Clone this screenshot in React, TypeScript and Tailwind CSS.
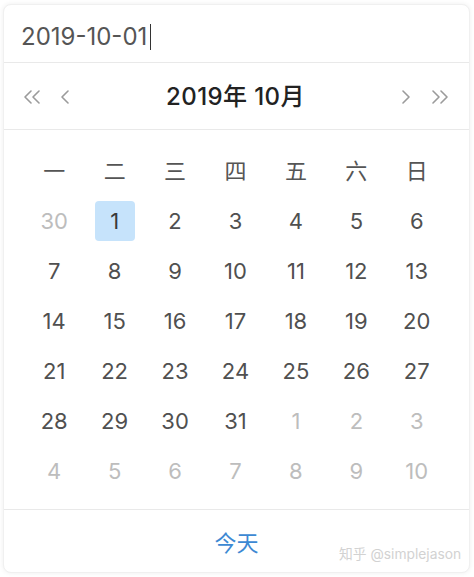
import { useState } from 'react';

const weekdays = ['一', '二', '三', '四', '五', '六', '日'];

interface Day {
  n: number;
  inMonth: boolean;
}

// October 2019, weeks starting on Monday
function buildDays(): Day[] {
  const days: Day[] = [{ n: 30, inMonth: false }];
  for (let d = 1; d <= 31; d++) days.push({ n: d, inMonth: true });
  let next = 1;
  while (days.length < 42) days.push({ n: next++, inMonth: false });
  return days;
}

function Chevron({ dir, double }: { dir: 'left' | 'right'; double?: boolean }) {
  const single = dir === 'left' ? 'M8 1 L2 7 L8 13' : 'M1 1 L7 7 L1 13';
  if (!double) {
    return (
      <svg width="9" height="14" viewBox="0 0 9 14" fill="none" stroke="#9b9b9b" strokeWidth="1.6" strokeLinecap="round" strokeLinejoin="round">
        <path d={single} />
      </svg>
    );
  }
  const paths = dir === 'left'
    ? ['M8 1 L2 7 L8 13', 'M16 1 L10 7 L16 13']
    : ['M1 1 L7 7 L1 13', 'M9 1 L15 7 L9 13'];
  return (
    <svg width="17" height="14" viewBox="0 0 17 14" fill="none" stroke="#9b9b9b" strokeWidth="1.6" strokeLinecap="round" strokeLinejoin="round">
      {paths.map((d) => (
        <path key={d} d={d} />
      ))}
    </svg>
  );
}

export default function App() {
  const [selected, setSelected] = useState(1);
  const days = buildDays();

  return (
    <div className="relative w-[474px] h-[577px] bg-white overflow-hidden font-[Inter,'Noto_Sans_CJK_SC',sans-serif]">
      <div className="pt-[4px] pl-[3px]">
        <div className="w-[467px] h-[569px] flex flex-col rounded-[8px] bg-white border border-[#f0f0f0] shadow-[0_0_5px_rgba(0,0,0,0.07)]">
          {/* Input */}
          <div className="h-[58px] flex items-center pl-[17px] pt-[6px] border-b border-[#e9e9e9]">
            <span className="text-[24px] leading-none text-[#555]">2019-10-01</span>
            <span className="ml-[3px] w-px h-[26px] bg-[#333]" />
          </div>

          {/* Month header */}
          <div className="h-[67px] flex items-center justify-between pl-[19px] pr-[20px] pt-[1px] border-b border-[#e9e9e9]">
            <div className="flex items-center gap-[20px]">
              <Chevron dir="left" double />
              <Chevron dir="left" />
            </div>
            <div className="text-[24px] font-medium text-[#222] leading-none tracking-[0.4px]">2019年 10月</div>
            <div className="flex items-center gap-[21px]">
              <Chevron dir="right" />
              <Chevron dir="right" double />
            </div>
          </div>

          {/* Day grid */}
          <div className="pt-[16px] pl-[20px] pr-[22px] pb-[13px] border-b border-[#e9e9e9]">
            <div className="grid grid-cols-7 auto-rows-[50px]">
              {weekdays.map((w) => (
                <div key={w} className="flex items-center justify-center text-[22px] text-[#555]">
                  {w}
                </div>
              ))}
              {days.map((d, i) => {
                const isSel = d.inMonth && d.n === selected;
                return (
                  <div key={i} className="flex items-center justify-center">
                    <button
                      type="button"
                      onClick={() => d.inMonth && setSelected(d.n)}
                      className={`w-[40px] h-[40px] flex items-center justify-center rounded-[4px] text-[22px] leading-none ${
                        isSel ? 'bg-[#c6e3fb] text-[#3a3a3a]' : d.inMonth ? 'text-[#505050]' : 'text-[#bdbdbd]'
                      }`}
                    >
                      {d.n}
                    </button>
                  </div>
                );
              })}
            </div>
          </div>

          {/* Footer */}
          <div className="flex-1 flex items-center justify-center pt-[4px]">
            <button type="button" className="text-[22px] text-[#3d89d3] leading-none">
              今天
            </button>
          </div>
        </div>
      </div>

      <div className="absolute left-[339px] top-[548px] whitespace-nowrap text-[13.8px] leading-none text-[#d2d2d2]">
        知乎 @simplejason
      </div>
    </div>
  );
}
